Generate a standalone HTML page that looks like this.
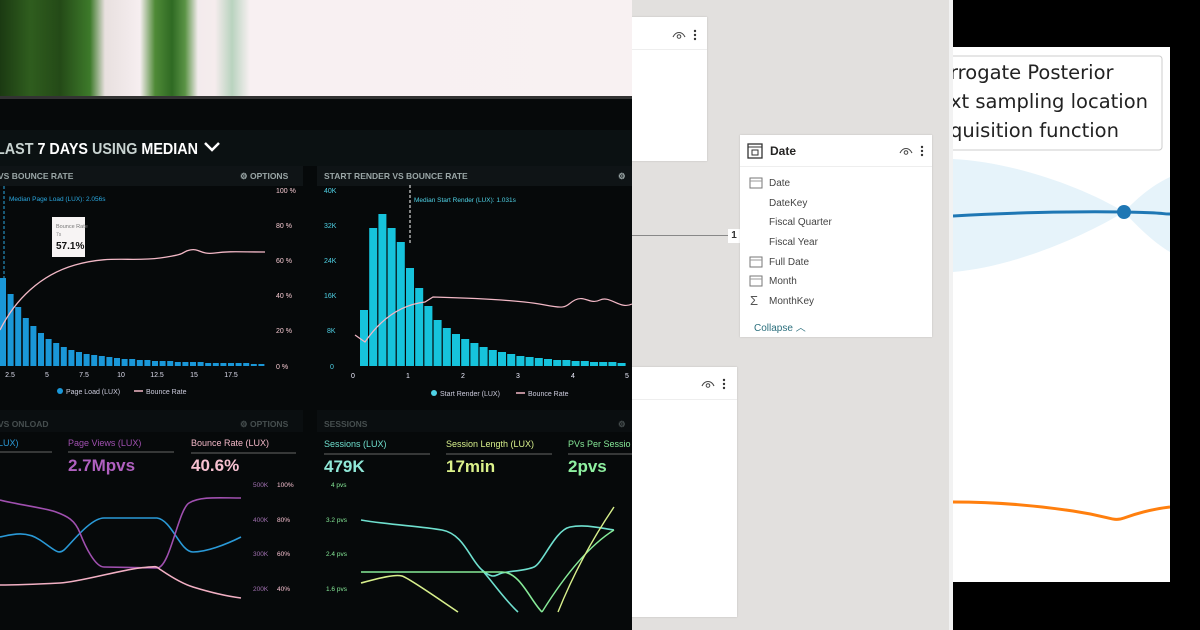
<!DOCTYPE html>
<html><head><meta charset="utf-8"><style>
*{margin:0;padding:0;box-sizing:border-box}
body{width:1200px;height:630px;overflow:hidden;background:#000;font-family:"Liberation Sans",sans-serif;position:relative}
.abs{position:absolute}
.card{position:absolute;background:#fff;box-shadow:0 0 2px rgba(0,0,0,.15)}
.it{position:absolute;left:29px;font-size:10px;color:#444}
</style></head><body>
<!-- LEFT PANEL -->
<div class="abs" style="left:0;top:0;width:632px;height:630px;overflow:hidden;background:#06090a">
<div class="abs" style="left:0;top:0;width:632px;height:98px;background:linear-gradient(90deg,#1b3a12 0,#2f5d1e 30px,#244a17 60px,#3d7a2a 90px,#e8e0df 105px,#f6eef0 140px,#4f8a37 155px,#2f6a23 172px,#5a9345 185px,#f3ebed 198px,#f5eced 215px,#b9d3bf 232px,#f8f0f2 250px,#f8f1f2 632px)"></div>
<div class="abs" style="left:0;top:96px;width:632px;height:3px;background:#333"></div>
<svg class="abs" style="left:0;top:0" width="632" height="630">
<rect x="0" y="130" width="632" height="36" fill="#0b1112"/>
<text x="-4" y="154" font-size="16" font-weight="bold" fill="#c8d3d0" textLength="202" lengthAdjust="spacingAndGlyphs">LAST <tspan fill="#fff">7 DAYS</tspan> USING <tspan fill="#fff">MEDIAN</tspan></text>
<path d="M205 143l7 7 7-7" stroke="#fff" stroke-width="2.5" fill="none"/>
<rect x="0" y="166" width="303" height="20" fill="#0f1416"/>
<rect x="317" y="166" width="315" height="20" fill="#0f1416"/>
<g font-size="8.5" font-weight="bold" fill="#9aa6a6">
<text x="-2" y="179">VS BOUNCE RATE</text><text x="240" y="179">⚙ OPTIONS</text>
<text x="324" y="179">START RENDER VS BOUNCE RATE</text><text x="618" y="179">⚙</text>
<text x="-2" y="427">VS ONLOAD</text><text x="240" y="427">⚙ OPTIONS</text>
<text x="324" y="427">SESSIONS</text><text x="618" y="427">⚙</text>
</g>
<rect x="0" y="410" width="303" height="22" fill="#0d1214" opacity=".6"/>
<rect x="317" y="410" width="315" height="22" fill="#0d1214" opacity=".6"/>
<g font-size="7" fill="#f4c8d0"><text x="276" y="193">100 %</text><text x="276" y="228">80 %</text><text x="276" y="263">60 %</text><text x="276" y="298">40 %</text><text x="276" y="333">20 %</text><text x="276" y="369">0 %</text></g>
<line x1="4" y1="186" x2="4" y2="366" stroke="#2aa8e0" stroke-dasharray="3 2"/>
<text x="9" y="201" font-size="6.5" fill="#2aa8e0">Median Page Load (LUX): 2.056s</text>
<g fill="#1a97d8">
<rect x="0" y="278" width="6" height="88"/><rect x="7.6" y="294" width="6" height="72"/><rect x="15.2" y="307" width="6" height="59"/><rect x="22.8" y="318" width="6" height="48"/><rect x="30.4" y="326" width="6" height="40"/><rect x="38" y="333" width="6" height="33"/><rect x="45.6" y="339" width="6" height="27"/><rect x="53.2" y="343" width="6" height="23"/><rect x="60.8" y="347" width="6" height="19"/><rect x="68.4" y="350" width="6" height="16"/><rect x="76" y="352" width="6" height="14"/><rect x="83.6" y="354" width="6" height="12"/><rect x="91.2" y="355" width="6" height="11"/><rect x="98.8" y="356" width="6" height="10"/><rect x="106.4" y="357" width="6" height="9"/><rect x="114" y="358" width="6" height="8"/><rect x="121.6" y="359" width="6" height="7"/><rect x="129.2" y="359" width="6" height="7"/><rect x="136.8" y="360" width="6" height="6"/><rect x="144.4" y="360" width="6" height="6"/><rect x="152" y="361" width="6" height="5"/><rect x="159.6" y="361" width="6" height="5"/><rect x="167.2" y="361" width="6" height="5"/><rect x="174.8" y="362" width="6" height="4"/><rect x="182.4" y="362" width="6" height="4"/><rect x="190" y="362" width="6" height="4"/><rect x="197.6" y="362" width="6" height="4"/><rect x="205.2" y="363" width="6" height="3"/><rect x="212.8" y="363" width="6" height="3"/><rect x="220.4" y="363" width="6" height="3"/><rect x="228" y="363" width="6" height="3"/><rect x="235.6" y="363" width="6" height="3"/><rect x="243.2" y="363" width="6" height="3"/><rect x="250.8" y="364" width="6" height="2"/><rect x="258.4" y="364" width="6" height="2"/>
</g>
<path d="M0 330 C15 300 40 275 75 265 S130 262 160 258 S180 252 190 250 S200 255 215 253 S240 252 265 252" stroke="#f2b8c6" stroke-width="1.3" fill="none"/>
<rect x="52" y="217" width="33" height="40" fill="#f7f4f4"/>
<text x="56" y="228" font-size="5.5" fill="#777">Bounce Rate</text><text x="56" y="236" font-size="5" fill="#888">7s</text>
<text x="56" y="249" font-size="10" font-weight="bold" fill="#111">57.1%</text>
<g font-size="7" fill="#dde" text-anchor="middle"><text x="10" y="377">2.5</text><text x="47" y="377">5</text><text x="84" y="377">7.5</text><text x="121" y="377">10</text><text x="157" y="377">12.5</text><text x="194" y="377">15</text><text x="231" y="377">17.5</text></g>
<circle cx="60" cy="391" r="3" fill="#1a97d8"/><text x="66" y="394" font-size="7" fill="#ccd">Page Load (LUX)</text>
<line x1="134" y1="391" x2="143" y2="391" stroke="#f2b8c6" stroke-width="1.5"/><text x="146" y="394" font-size="7" fill="#ccd">Bounce Rate</text>
<g font-size="7" fill="#4fd2e6"><text x="324" y="193">40K</text><text x="324" y="228">32K</text><text x="324" y="263">24K</text><text x="324" y="298">16K</text><text x="327" y="333">8K</text><text x="330" y="369">0</text></g>
<g fill="#16c3dc">
<rect x="360" y="310" width="8" height="56"/><rect x="369.2" y="228" width="8" height="138"/><rect x="378.4" y="214" width="8" height="152"/><rect x="387.6" y="228" width="8" height="138"/><rect x="396.8" y="242" width="8" height="124"/><rect x="406" y="268" width="8" height="98"/><rect x="415.2" y="288" width="8" height="78"/><rect x="424.4" y="306" width="8" height="60"/><rect x="433.6" y="320" width="8" height="46"/><rect x="442.8" y="328" width="8" height="38"/><rect x="452" y="334" width="8" height="32"/><rect x="461.2" y="339" width="8" height="27"/><rect x="470.4" y="343" width="8" height="23"/><rect x="479.6" y="347" width="8" height="19"/><rect x="488.8" y="350" width="8" height="16"/><rect x="498" y="352" width="8" height="14"/><rect x="507.2" y="354" width="8" height="12"/><rect x="516.4" y="356" width="8" height="10"/><rect x="525.6" y="357" width="8" height="9"/><rect x="534.8" y="358" width="8" height="8"/><rect x="544" y="359" width="8" height="7"/><rect x="553.2" y="360" width="8" height="6"/><rect x="562.4" y="360" width="8" height="6"/><rect x="571.6" y="361" width="8" height="5"/><rect x="580.8" y="361" width="8" height="5"/><rect x="590" y="362" width="8" height="4"/><rect x="599.2" y="362" width="8" height="4"/><rect x="608.4" y="362" width="8" height="4"/><rect x="617.6" y="363" width="8" height="3"/>
</g>
<line x1="410" y1="185" x2="410" y2="245" stroke="#fff" stroke-dasharray="3 2"/>
<text x="414" y="202" font-size="6.5" fill="#4fd2e6">Median Start Render (LUX): 1.031s</text>
<path d="M355 335 L365 342 C380 320 400 305 425 302 L433 297 C470 298 520 300 545 305 S565 305 575 300 S590 305 600 300 S620 310 632 304" stroke="#f2b8c6" stroke-width="1.2" fill="none"/>
<g font-size="7" fill="#eef" text-anchor="middle"><text x="353" y="378">0</text><text x="408" y="378">1</text><text x="463" y="378">2</text><text x="518" y="378">3</text><text x="573" y="378">4</text><text x="627" y="378">5</text></g>
<circle cx="434" cy="393" r="3" fill="#4fd2e6"/><text x="440" y="396" font-size="7" fill="#ccd">Start Render (LUX)</text>
<line x1="516" y1="393" x2="525" y2="393" stroke="#f2b8c6" stroke-width="1.5"/><text x="528" y="396" font-size="7" fill="#ccd">Bounce Rate</text>
<g font-size="9">
<text x="-2" y="446" fill="#2b9ad8">LUX)</text><text x="68" y="446" fill="#a050b0">Page Views (LUX)</text><text x="191" y="446" fill="#f4b8c8">Bounce Rate (LUX)</text>
<text x="324" y="447" fill="#6fe0cf">Sessions (LUX)</text><text x="446" y="447" fill="#d8f08c">Session Length (LUX)</text><text x="568" y="447" fill="#86ea98">PVs Per Sessio</text>
</g>
<g stroke="#666" stroke-width="1"><line x1="0" y1="452" x2="52" y2="452"/><line x1="68" y1="452" x2="174" y2="452"/><line x1="191" y1="453" x2="296" y2="453"/><line x1="324" y1="454" x2="430" y2="454"/><line x1="446" y1="454" x2="552" y2="454"/><line x1="568" y1="454" x2="632" y2="454"/></g>
<g font-size="17" font-weight="bold">
<text x="68" y="471" fill="#b060c0">2.7Mpvs</text><text x="191" y="471" fill="#f6c0d0">40.6%</text>
<text x="324" y="472" fill="#8fe8d8">479K</text><text x="446" y="472" fill="#dcf28a">17min</text><text x="568" y="472" fill="#8ef0a0">2pvs</text>
</g>
<g font-size="6.5"><text x="253" y="487" fill="#a070b0">500K</text><text x="253" y="522" fill="#a070b0">400K</text><text x="253" y="556" fill="#a070b0">300K</text><text x="253" y="591" fill="#a070b0">200K</text>
<g fill="#f6c0d0"><text x="277" y="487">100%</text><text x="277" y="522">80%</text><text x="277" y="556">60%</text><text x="277" y="591">40%</text></g>
<g fill="#86ea98"><text x="331" y="487">4 pvs</text><text x="326" y="522">3.2 pvs</text><text x="326" y="556">2.4 pvs</text><text x="326" y="591">1.6 pvs</text></g></g>
<path d="M0 537 C10 535 25 530 40 540 S58 555 64 550 S90 518 104 518 L157 518 C172 520 180 552 193 552 S225 545 241 537" stroke="#2a9ad8" stroke-width="1.6" fill="none"/>
<path d="M0 500 C20 505 45 508 56 512 S75 520 80 533 S95 567 104 567 L157 568 C170 568 178 510 189 503 S220 498 241 498" stroke="#a050b0" stroke-width="1.6" fill="none"/>
<path d="M0 585 C20 585 40 584 60 583 S120 570 140 568 S155 566 161 570 S180 583 193 587 S225 596 241 598" stroke="#f2b0c4" stroke-width="1.6" fill="none"/>
<path d="M361 520 C390 525 420 526 442 530 S470 560 482 570 S495 575 502 573 S525 571 534 567 S555 530 570 527 S600 528 614 530" stroke="#6fe0cf" stroke-width="1.6" fill="none"/>
<path d="M482 570 C495 585 505 600 518 612" stroke="#6fe0cf" stroke-width="1.6" fill="none"/>
<path d="M361 572 L502 572 C520 572 530 600 542 612" stroke="#86ea98" stroke-width="1.6" fill="none"/>
<path d="M542 612 C565 575 590 545 614 530" stroke="#86ea98" stroke-width="1.4" fill="none"/>
<path d="M361 583 C380 578 395 574 402 576 S440 600 458 612" stroke="#d8f08c" stroke-width="1.6" fill="none"/>
<path d="M558 612 C575 570 595 535 614 507" stroke="#d8f08c" stroke-width="1.4" fill="none"/>
</svg>
</div>
<!-- MIDDLE PANEL -->
<div class="abs" style="left:632px;top:0;width:321px;height:630px;background:#e2e0de;overflow:hidden">
<div class="abs" style="left:-2px;top:235px;width:98px;height:1px;background:#888"></div>
<div class="abs" style="left:96px;top:229px;width:12px;height:14px;background:#fff;font-size:10px;font-weight:bold;color:#333;text-align:center;line-height:14px">1</div>
<div class="card" style="left:-2px;top:17px;width:77px;height:144px"><div class="abs" style="left:0;top:32px;width:100%;height:1px;background:#eee"></div>
<svg class="abs" style="left:41px;top:11px" width="30" height="14"><path d="M2 9 C5 3 11 3 14 9" stroke="#444" fill="none" stroke-width="1.1"/><circle cx="8" cy="8.5" r="1.8" stroke="#444" fill="none"/><circle cx="24" cy="3" r="1.2" fill="#333"/><circle cx="24" cy="7" r="1.2" fill="#333"/><circle cx="24" cy="11" r="1.2" fill="#333"/></svg></div>
<div class="card" style="left:-2px;top:367px;width:107px;height:250px"><div class="abs" style="left:0;top:32px;width:100%;height:1px;background:#eee"></div>
<svg class="abs" style="left:70px;top:10px" width="30" height="14"><path d="M2 9 C5 3 11 3 14 9" stroke="#444" fill="none" stroke-width="1.1"/><circle cx="8" cy="8.5" r="1.8" stroke="#444" fill="none"/><circle cx="24" cy="3" r="1.2" fill="#333"/><circle cx="24" cy="7" r="1.2" fill="#333"/><circle cx="24" cy="11" r="1.2" fill="#333"/></svg></div>
<div class="card" style="left:108px;top:135px;width:192px;height:202px">
<svg class="abs" style="left:7px;top:8px" width="16" height="16"><rect x="1" y="1" width="14" height="14" fill="none" stroke="#333" stroke-width="1.3"/><line x1="1" y1="4" x2="15" y2="4" stroke="#333"/><rect x="5" y="7" width="6" height="5" fill="none" stroke="#333"/></svg>
<div class="abs" style="left:30px;top:9px;font-size:12px;font-weight:bold;color:#252423">Date</div>
<svg class="abs" style="left:158px;top:9px" width="30" height="14"><path d="M2 9 C5 3 11 3 14 9" stroke="#444" fill="none" stroke-width="1.1"/><circle cx="8" cy="8.5" r="1.8" stroke="#444" fill="none"/><circle cx="24" cy="3" r="1.2" fill="#333"/><circle cx="24" cy="7" r="1.2" fill="#333"/><circle cx="24" cy="11" r="1.2" fill="#333"/></svg>
<div class="abs" style="left:0;top:31px;width:100%;height:1px;background:#eee"></div>
<svg class="abs" style="left:9px;top:42px" width="14" height="130">
<g fill="none" stroke="#777"><rect x="1" y="1" width="12" height="10"/><rect x="1" y="80" width="12" height="10"/><rect x="1" y="99" width="12" height="10"/></g>
<g stroke="#999"><line x1="1" y1="4" x2="13" y2="4"/><line x1="1" y1="83" x2="13" y2="83"/><line x1="1" y1="102" x2="13" y2="102"/></g>
<text x="1" y="128" font-size="13" fill="#555">Σ</text></svg>
<div class="it" style="top:43px">Date</div><div class="it" style="top:63px">DateKey</div><div class="it" style="top:82px">Fiscal Quarter</div><div class="it" style="top:102px">Fiscal Year</div><div class="it" style="top:122px">Full Date</div><div class="it" style="top:141px">Month</div><div class="it" style="top:161px">MonthKey</div>
<div class="abs" style="left:14px;top:184px;font-size:10px;color:#2b6f7d">Collapse ︿</div>
</div>
<div class="abs" style="left:317px;top:0;width:4px;height:630px;background:#f2f2f2"></div>
</div>
<!-- RIGHT PANEL -->
<div class="abs" style="left:953px;top:47px;width:217px;height:535px;background:#fff;overflow:hidden">
<svg class="abs" style="left:0;top:0" width="217" height="535">
<path d="M0 112 C60 115 130 140 171 165 C185 150 200 138 217 130 L217 205 C200 195 185 180 171 165 C130 190 60 220 0 225 Z" fill="#e6f3fa"/>
<path d="M0 169 C50 166 120 164 171 165 S205 167 217 167" stroke="#1f77b4" stroke-width="3" fill="none"/>
<circle cx="171" cy="165" r="7" fill="#1f77b4"/>
<path d="M0 455 C40 455 80 458 120 464 S160 475 171 471 S200 462 217 460" stroke="#ff7f0e" stroke-width="3" fill="none"/>
<rect x="-5" y="9" width="214" height="94" rx="3" fill="#fff" stroke="#ccc"/>
<g font-family="DejaVu Sans" font-size="19.5" fill="#222"><text x="-3" y="32">rrogate Posterior</text><text x="-3" y="61">xt sampling location</text><text x="-3" y="90">quisition function</text></g>
</svg>
</div>
</body></html>
